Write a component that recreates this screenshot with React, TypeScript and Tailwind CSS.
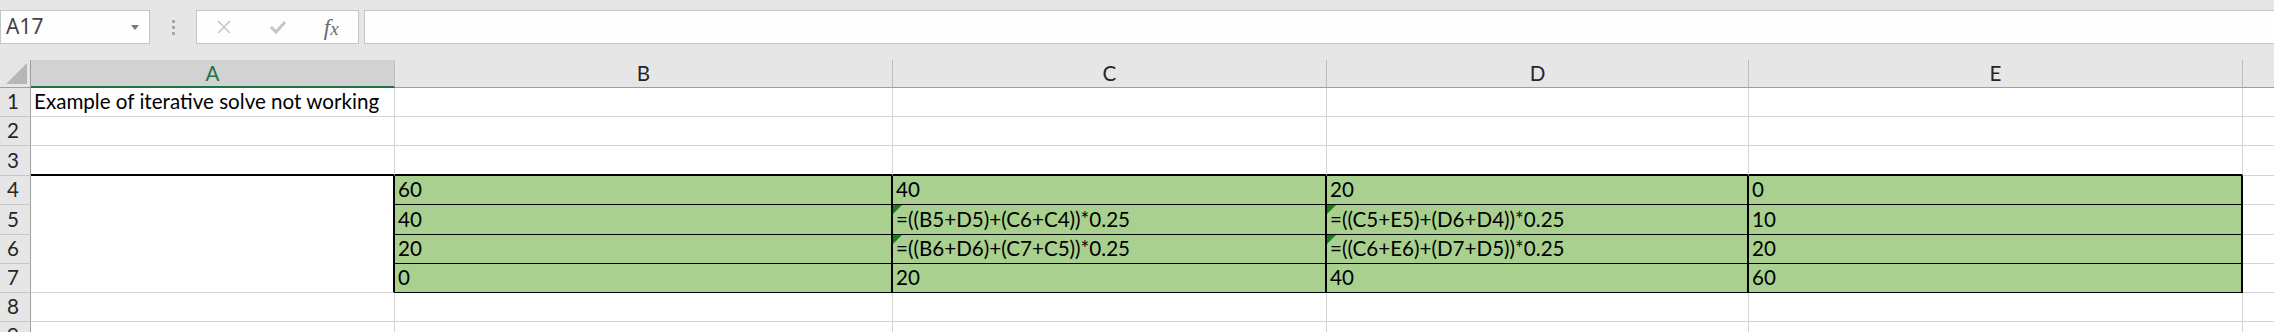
const COLS = ['A', 'B', 'C', 'D', 'E']
const WIDTHS = ['w-[364px]', 'w-[498px]', 'w-[434px]', 'w-[422px]', 'w-[494px]']
const ROW_H = ['h-[29px]', 'h-[29px]', 'h-[30px]', 'h-[29px]', 'h-[30px]', 'h-[29px]', 'h-[29px]', 'h-[29px]', 'h-[29px]']

// cell text, keyed by row then column letter
const DATA: Record<number, Record<string, string>> = {
  1: { A: 'Example of iterative solve not working' },
  4: { B: '60', C: '40', D: '20', E: '0' },
  5: { B: '40', C: '=((B5+D5)+(C6+C4))*0.25', D: '=((C5+E5)+(D6+D4))*0.25', E: '10' },
  6: { B: '20', C: '=((B6+D6)+(C7+C5))*0.25', D: '=((C6+E6)+(D7+D5))*0.25', E: '20' },
  7: { B: '0', C: '20', D: '40', E: '60' },
}

const FLAGGED = ['C5', 'C6', 'D5', 'D6']

function cellClass(r: number, c: string) {
  const inTable = r >= 4 && r <= 7
  if (inTable && c === 'A') {
    return r === 7
      ? 'bg-white border-r-2 border-r-black border-b border-b-[#d4d4d4]'
      : 'bg-white border-r-2 border-r-black'
  }
  if (inTable) return 'bg-[#a9d08e] border-r-2 border-r-black border-b border-b-black'
  if (r === 3) return 'bg-white border-r border-r-[#d4d4d4] border-b-2 border-b-black'
  return 'bg-white border-r border-b border-[#d4d4d4]'
}

export default function App() {
  return (
    <div className="h-[332px] w-[2274px] overflow-hidden bg-white font-['Lato',sans-serif] text-[20.6px] text-black">
      {/* ── formula bar ── */}
      <div className="flex h-[60px] items-start bg-[#e6e6e6] pt-[10px]">
        <div className="flex h-[34px] w-[150px] items-center justify-between border border-[#c6c6c6] bg-[#fefefe] pl-[5px] pr-[10px] font-['Noto_Sans',sans-serif] text-[21px] text-[#444]">
          <span>A17</span>
          <svg width="8" height="5" viewBox="0 0 8 5">
            <path d="M0 0 L8 0 L4 5 Z" fill="#7a7a7a" />
          </svg>
        </div>
        <div className="flex h-[34px] w-[46px] flex-col items-center justify-center gap-[3px]">
          <span className="h-[3px] w-[3px] bg-[#a6a6a6]" />
          <span className="h-[3px] w-[3px] bg-[#a6a6a6]" />
          <span className="h-[3px] w-[3px] bg-[#a6a6a6]" />
        </div>
        <div className="flex h-[34px] w-[163px] items-center border border-[#c6c6c6] bg-[#fefefe]">
          <div className="flex w-[54px] justify-center">
            <svg width="16" height="16" viewBox="0 0 16 16">
              <path d="M2 2 L14 14 M14 2 L2 14" stroke="#c6c6c6" strokeWidth="1.6" />
            </svg>
          </div>
          <div className="flex w-[54px] justify-center">
            <svg width="18" height="16" viewBox="0 0 18 16">
              <path d="M2 8 L7 13 L16 3" stroke="#c6c6c6" strokeWidth="3" fill="none" />
            </svg>
          </div>
          <div className="flex w-[54px] items-center justify-center font-['Liberation_Serif',serif] text-[23px] leading-none italic text-[#6a6a6a]">
            <span>f</span>
            <span className="mt-[3px] text-[19px]">x</span>
          </div>
        </div>
        <div className="ml-[5px] h-[34px] flex-1 border border-r-0 border-[#c6c6c6] bg-[#fefefe]" />
      </div>

      {/* ── column headers ── */}
      <div className="flex h-[28px]">
        <div className="relative h-full w-[31px] border-r border-b border-[#9e9e9e] bg-[#e6e6e6]">
          <svg className="absolute right-[3px] bottom-[3px]" width="21" height="21" viewBox="0 0 21 21">
            <path d="M21 0 L21 21 L0 21 Z" fill="#b6b6b6" />
          </svg>
        </div>
        {COLS.map((c, i) => (
          <div
            key={c}
            className={`${WIDTHS[i]} flex h-full items-center justify-center border-r border-r-[#bdbdbd] ${
              c === 'A' ? 'border-b-2 border-b-[#217346] bg-[#d2d2d2] text-[#217346]' : 'border-b border-b-[#9e9e9e] bg-[#e6e6e6] text-[#262626]'
            }`}
          >
            {c}
          </div>
        ))}
        <div className="h-full flex-1 border-b border-b-[#9e9e9e] bg-[#e6e6e6]" />
      </div>

      {/* ── rows ── */}
      {ROW_H.map((h, ri) => {
        const r = ri + 1
        return (
          <div key={r} className={`flex ${h}`}>
            <div className="flex h-full w-[31px] items-end border-r border-r-[#9e9e9e] border-b border-b-[#c8c8c8] bg-[#e6e6e6] pb-[4px] pl-[7px] leading-none text-[#262626]">
              {r}
            </div>
            {COLS.map((c, i) => (
              <div key={c} className={`relative flex h-full items-end pb-[4px] pl-[3px] leading-none whitespace-nowrap ${WIDTHS[i]} ${cellClass(r, c)}`}>
                {FLAGGED.includes(`${c}${r}`) && (
                  <svg className="absolute top-0 left-0" width="9" height="9" viewBox="0 0 9 9">
                    <path d="M0 0 L9 0 L0 9 Z" fill="#1b7f1b" />
                  </svg>
                )}
                {DATA[r]?.[c] ?? ''}
              </div>
            ))}
            <div className="h-full flex-1 border-b border-[#d4d4d4] bg-white" />
          </div>
        )
      })}
    </div>
  )
}
